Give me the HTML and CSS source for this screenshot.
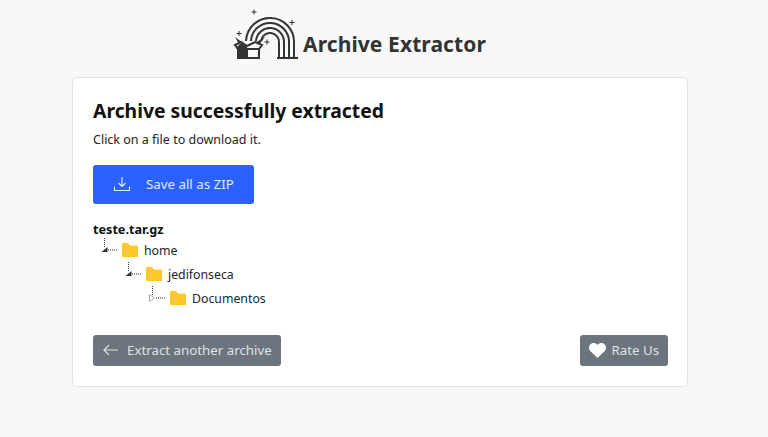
FILE: index.html
```html
<!DOCTYPE html>
<html lang="en">
<head>
  <meta charset="UTF-8" />
  <title>Archive Extractor</title>
  <link rel="stylesheet" href="styles.css">
</head>
<body>
  <header class="brand">
    <svg class="logo" width="65" height="51" viewBox="0 0 65 51" fill="none" stroke="#333">
      <!-- rainbow -->
      <path d="M13 33A24 24 0 0 1 61 35V50" stroke-width="2"/>
      <path d="M18 33A19 19 0 0 1 56 35V50" stroke-width="2"/>
      <path d="M23 33A14 14 0 0 1 51 35V50" stroke-width="2"/>
      <path d="M28 33A9 9 0 0 1 46 35V50" stroke-width="2"/>
      <path d="M44 50H65" stroke-width="2"/>
      <!-- box -->
      <path d="M5 40H14V50H5Z" fill="#333" stroke-width="2"/>
      <path d="M14 40H26V50H14Z" fill="#f8f8f8" stroke-width="2"/>
      <path d="M2 29L14 38L7 38Z" fill="#333" stroke="none"/>
      <path d="M32 29L25 38L20 36Z" fill="#333" stroke="none"/>
      <path d="M5 41L2 37L8 34L14 38L22 34L29 37L26 41H14Z" fill="#f8f8f8" stroke-width="2"/>
      <path d="M3 40L8 35L14 39V42H5Z" fill="#333" stroke="none"/>
      <!-- stars -->
      <path d="M21 1.500V6.500M18.500 4H23.500M59 12V17M56.500 14.500H61.500M6 23V28M3.500 25.500H8.500M34 31.500V36.500M31.500 34H36.500" stroke-width="1"/>
    </svg>
    <span class="brand-name">Archive Extractor</span>
  </header>

  <main class="card">
    <h1 class="card-title">Archive successfully extracted</h1>
    <p class="card-hint">Click on a file to download it.</p>

    <button class="btn btn-primary" type="button">
      <svg width="16" height="14" viewBox="0 0 16 14" fill="none" stroke="#e8eeff" stroke-width="1.100">
        <path d="M8 0V9.500M4.500 6L8 9.500L11.500 6M0.500 9.500V13.500H15.500V9.500"/>
      </svg>
      Save all as ZIP
    </button>

    <div class="tree">
      <div class="tree-root">teste.tar.gz</div>
      <div class="tree-row">
        <svg class="toggle" width="20" height="24" viewBox="0 0 20 24"><use href="#open"/></svg>
        <svg class="folder" width="16" height="14" viewBox="0 0 16 14"><use href="#folder"/></svg>
        <span>home</span>
      </div>
      <div class="tree-row tree-level-2">
        <svg class="toggle" width="20" height="24" viewBox="0 0 20 24"><use href="#open"/></svg>
        <svg class="folder" width="16" height="14" viewBox="0 0 16 14"><use href="#folder"/></svg>
        <span>jedifonseca</span>
      </div>
      <div class="tree-row tree-level-3">
        <svg class="toggle" width="20" height="24" viewBox="0 0 20 24"><use href="#closed"/></svg>
        <svg class="folder" width="16" height="14" viewBox="0 0 16 14"><use href="#folder"/></svg>
        <span>Documentos</span>
      </div>
    </div>

    <div class="card-actions">
      <button class="btn btn-muted" type="button">
        <svg width="16" height="12" viewBox="0 0 16 12" fill="none" stroke="#dfe2e5" stroke-width="1.200">
          <path d="M15 6H1M6 1L1 6L6 11"/>
        </svg>
        Extract another archive
      </button>
      <button class="btn btn-muted btn-rate" type="button">
        <svg width="17" height="15" viewBox="0 0 17 15" fill="#fff">
          <path d="M8.500 15L1.500 8.300C-0.500 6.300 -0.400 3 1.500 1.300C3.500 -0.500 6.500 -0.300 8.500 2C10.500 -0.300 13.500 -0.500 15.500 1.300C17.400 3 17.500 6.300 15.500 8.300Z"/>
        </svg>
        Rate Us
      </button>
    </div>
  </main>

  <!-- shared tree glyphs -->
  <svg class="defs" width="0" height="0">
    <defs>
      <g id="folder">
        <path d="M0 0H6L8 2.500H16V14H0Z" fill="#ffc828"/>
      </g>
      <g id="open">
        <path d="M4.500 0V9M8 12H18" stroke="#333" stroke-width="1" stroke-dasharray="1 1" fill="none"/>
        <path d="M7.500 9V14H1.500Z" fill="#333"/>
      </g>
      <g id="closed">
        <path d="M4.500 0V9M8 12H18" stroke="#333" stroke-width="1" stroke-dasharray="1 1" fill="none"/>
        <path d="M1.500 8.500L6.500 12L1.500 15.500Z" fill="#fff" stroke="#aaa" stroke-width="1"/>
      </g>
    </defs>
  </svg>
</body>
</html>
```

FILE: styles.css
```css
* {
  box-sizing: border-box;
}
body {
  margin: 0;
  background-color: #f8f8f8;
  font-family: "Noto Sans", sans-serif;
  color: #212529;
}
.brand {
  display: flex;
  justify-content: center;
  align-items: flex-end;
  gap: 5px;
  height: 59px;
  margin-right: 49px;
}
.logo {
  flex: none;
}
.brand-name {
  font-size: 21px;
  font-weight: 700;
  line-height: 29px;
  color: #333;
  letter-spacing: 0.1px;
}
.card {
  width: 616px;
  height: 310px;
  margin: 18px 0 0 72px;
  padding: 20px 19px 20px 20px;
  background-color: #fff;
  border: 1px solid #e3e3e3;
  border-radius: 4px;
}
.card-title {
  margin: 1px 0 0;
  font-size: 19.330px;
  font-weight: 700;
  line-height: 24px;
  color: #111;
}
.card-hint {
  margin: 7px 0 0;
  font-size: 12.500px;
  line-height: 20px;
  color: #212529;
}
.btn {
  display: inline-flex;
  align-items: center;
  border: 0;
  border-radius: 3px;
  padding-bottom: 2px;
  font-family: inherit;
  font-size: 13.300px;
  color: #dfe2e5;
}
.btn-primary {
  margin-top: 15px;
  width: 161px;
  height: 39px;
  padding-left: 21px;
  gap: 16px;
  background-color: #2b62ff;
  color: #e0e8ff;
}
.btn-muted {
  height: 31px;
  padding-left: 10px;
  padding-right: 9px;
  gap: 8px;
  background-color: #6c757d;
}
.btn-rate {
  gap: 5px;
  padding-left: 9px;
}
.tree {
  margin-top: 16px;
  font-size: 12.300px;
}
.tree-root {
  font-size: 12.650px;
  font-weight: 700;
  line-height: 18px;
  color: #111;
}
.tree-row {
  display: flex;
  align-items: center;
  height: 24px;
  padding-left: 7px;
}
.tree-level-2 {
  padding-left: 31px;
}
.tree-level-3 {
  padding-left: 55px;
}
.toggle {
  flex: none;
}
.folder {
  flex: none;
  margin: 0 6px 0 2px;
}
.card-actions {
  display: flex;
  justify-content: space-between;
  margin-top: 25px;
}
.defs {
  display: block;
}
```
